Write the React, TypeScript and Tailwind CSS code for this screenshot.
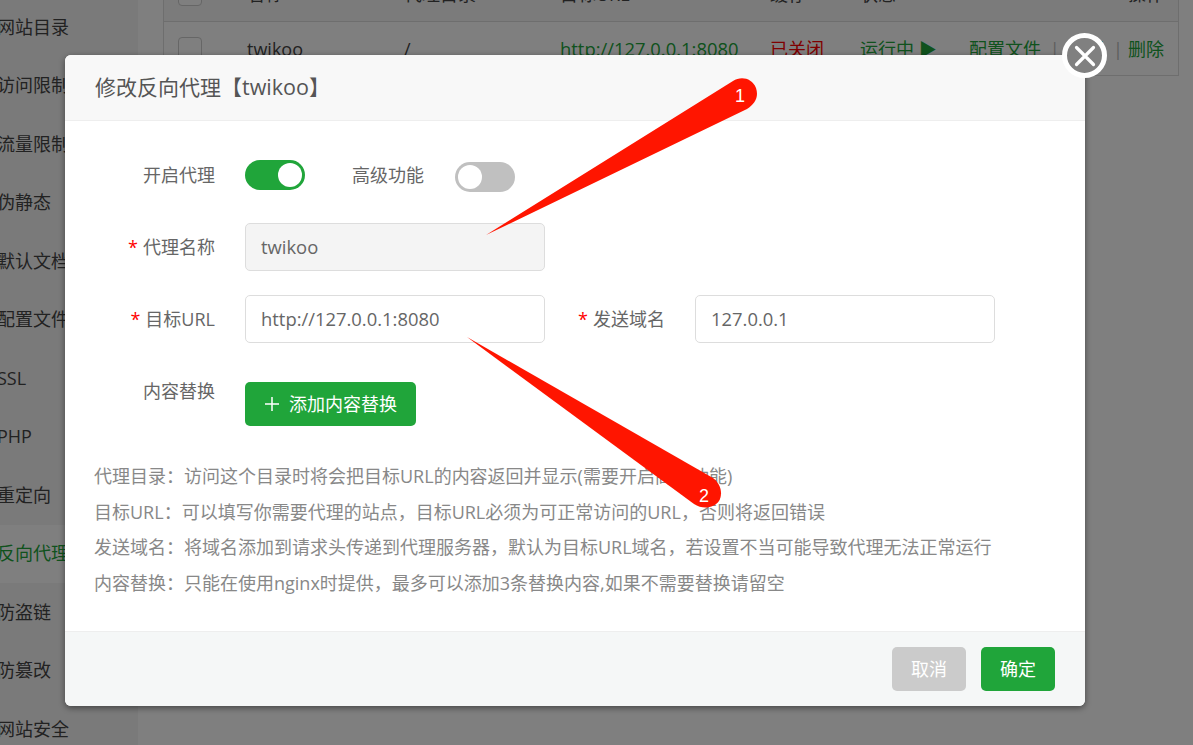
const sideItems = ['网站目录', '访问限制', '流量限制', '伪静态', '默认文档', '配置文件', 'SSL', 'PHP', '重定向', '反向代理', '防盗链', '防篡改', '网站安全'];

const notes = [
  '代理目录：访问这个目录时将会把目标URL的内容返回并显示(需要开启高级功能)',
  '目标URL：可以填写你需要代理的站点，目标URL必须为可正常访问的URL，否则将返回错误',
  '发送域名：将域名添加到请求头传递到代理服务器，默认为目标URL域名，若设置不当可能导致代理无法正常运行',
  '内容替换：只能在使用nginx时提供，最多可以添加3条替换内容,如果不需要替换请留空',
];

function Sidebar() {
  return (
    <aside className="mt-[-2px] h-[747px] w-[138px] shrink-0 overflow-hidden bg-[#f5f5f5]">
      {sideItems.map((item) => (
        <div
          key={item}
          className={`flex h-[58.5px] items-center text-[18px] ${item === '反向代理' ? 'bg-white text-[#20a53a]' : 'text-[#444]'}`}
        >
          <span className="ml-[-3px]">{item}</span>
        </div>
      ))}
    </aside>
  );
}

function ProxyTable() {
  return (
    <div className="ml-[25px] mt-[-34px] h-[110px] w-[1016px] border border-[#ddd] text-[18px] text-[#444]">
      <div className="flex h-[55px] items-center border-b border-[#ddd] bg-[#f6f6f6]">
        <span className="ml-[14px] h-6 w-6 rounded border border-[#ccc] bg-white" />
        <span className="ml-[45px] w-[157px]">名称</span>
        <span className="w-[156px]">代理目录</span>
        <span className="w-[210px]">目标URL</span>
        <span className="w-[90px]">缓存</span>
        <span className="w-[268px]">状态</span>
        <span>操作</span>
      </div>
      <div className="flex h-[54px] items-center">
        <span className="ml-[14px] h-6 w-6 rounded border border-[#ccc] bg-white" />
        <span className="ml-[45px] w-[157px]">twikoo</span>
        <span className="w-[156px]">/</span>
        <span className="w-[210px] text-[18.4px] text-[#20a53a]">http://127.0.0.1:8080</span>
        <span className="w-[90px] text-[#f00]">已关闭</span>
        <span className="w-[109px] text-[#20a53a]">运行中 ▶</span>
        <span className="w-[159px] whitespace-nowrap text-[#20a53a]">
          配置文件 <span className="mx-1 text-[#bbb]">|</span> 编辑 <span className="mx-1 text-[#bbb]">|</span>
        </span>
        <span className="text-[#20a53a]">删除</span>
      </div>
    </div>
  );
}

function Toggle({ on }: { on: boolean }) {
  return (
    <span className={`flex h-[30px] w-[60px] items-center rounded-full p-[3px] ${on ? 'justify-end bg-[#20a53a]' : 'justify-start bg-[#c0c0c0]'}`}>
      <span className="h-6 w-6 rounded-full bg-white" />
    </span>
  );
}

function FieldLabel({ text, required }: { text: string; required?: boolean }) {
  return (
    <span className="text-[18px] whitespace-nowrap text-[#666]">
      {required && <span className="mr-[5px] text-[#f00]">*</span>}
      {text}
    </span>
  );
}

function TextBox({ value, disabled }: { value: string; disabled?: boolean }) {
  return (
    <div className={`flex h-12 w-[300px] items-center rounded-[5px] border border-[#ddd] px-[15px] text-[18.4px] text-[#666] ${disabled ? 'bg-[#f4f4f4]' : 'bg-white'}`}>
      {value}
    </div>
  );
}

function Callouts() {
  return (
    <svg className="pointer-events-none absolute left-0 top-0" width="1193" height="745" viewBox="0 0 1193 745">
      <path d="M486 235 L733 81 C741 76 752 78 756 88 C759 97 755 104 747 109 Z" fill="#ff1500" />
      <path d="M467 337 L713 478 C721 484 723 494 719 501 C714 508 703 510 694 504 Z" fill="#ff1500" />
      <text x="740" y="102" fill="#fff" fontSize="18" textAnchor="middle" fontFamily="Liberation Sans, sans-serif">1</text>
      <text x="704" y="502" fill="#fff" fontSize="18" textAnchor="middle" fontFamily="Liberation Sans, sans-serif">2</text>
    </svg>
  );
}

function ProxyModal() {
  return (
    <div className="absolute left-[65px] top-[55px] flex h-[651px] w-[1020px] flex-col rounded-[6px] bg-white shadow-[0_2px_6px_rgba(0,0,0,0.45)]">
      <div className="flex h-[66px] shrink-0 items-center rounded-t-[6px] border-b border-[#eee] bg-[#f8f8f8] pl-[30px] text-[21px] text-[#555]">
        修改反向代理【<span className="text-[21.5px]">twikoo</span>】
      </div>

      <div className="flex-1 pt-[39px]">
        <div className="flex h-[30px] items-center">
          <div className="w-[150px] text-right"><FieldLabel text="开启代理" /></div>
          <div className="ml-[30px]"><Toggle on /></div>
          <div className="ml-[47px]"><FieldLabel text="高级功能" /></div>
          <div className="ml-[31px] mt-1"><Toggle on={false} /></div>
        </div>

        <div className="mt-[33px] flex items-center">
          <div className="w-[150px] text-right"><FieldLabel text="代理名称" required /></div>
          <div className="ml-[30px]"><TextBox value="twikoo" disabled /></div>
        </div>

        <div className="mt-6 flex items-center">
          <div className="w-[150px] text-right"><FieldLabel text="目标URL" required /></div>
          <div className="ml-[30px]"><TextBox value="http://127.0.0.1:8080" /></div>
          <div className="w-[120px] text-right"><FieldLabel text="发送域名" required /></div>
          <div className="ml-[30px]"><TextBox value="127.0.0.1" /></div>
        </div>

        <div className="mt-[39px] flex items-start">
          <div className="mt-[-4px] w-[150px] text-right"><FieldLabel text="内容替换" /></div>
          <div className="ml-[30px] flex h-11 w-[171px] items-center justify-center gap-[9px] rounded-[5px] bg-[#20a53a] text-[18px] text-white">
            <svg width="16" height="16" viewBox="0 0 16 16" stroke="#fff" strokeWidth="1.5"><path d="M8 1v14M1 8h14" /></svg>
            添加内容替换
          </div>
        </div>

        <div className="ml-[29px] mt-[33px] text-[18px] leading-[35.6px] text-[#888]">
          {notes.map((note) => (
            <p key={note} className="whitespace-nowrap">{note}</p>
          ))}
        </div>
      </div>

      <div className="flex h-[75px] shrink-0 items-center justify-end gap-[15px] rounded-b-[6px] border-t border-[#eee] bg-[#f5f7f7] pr-[30px] text-[18px] text-white">
        <span className="flex h-11 w-[74px] items-center justify-center rounded-[5px] bg-[#cbcbcb]">取消</span>
        <span className="flex h-11 w-[74px] items-center justify-center rounded-[5px] bg-[#20a53a]">确定</span>
      </div>

      <button
        type="button"
        aria-label="关闭"
        className="absolute right-[-22px] top-[-22px] flex h-[45px] w-[45px] items-center justify-center rounded-full border-[5px] border-white bg-[#808080]"
      >
        <svg width="24" height="24" viewBox="0 0 24 24" stroke="#fff" strokeWidth="3.2" strokeLinecap="round"><path d="M3.5 3.5l17 17M20.5 3.5l-17 17" /></svg>
      </button>
    </div>
  );
}

export default function App() {
  return (
    <div className="relative h-[745px] w-[1193px] overflow-hidden bg-white font-['Open_Sans','Noto_Sans_CJK_SC',sans-serif]">
      <div className="flex">
        <Sidebar />
        <ProxyTable />
      </div>
      <div className="absolute inset-0 bg-black/50" />
      <ProxyModal />
      <Callouts />
    </div>
  );
}
